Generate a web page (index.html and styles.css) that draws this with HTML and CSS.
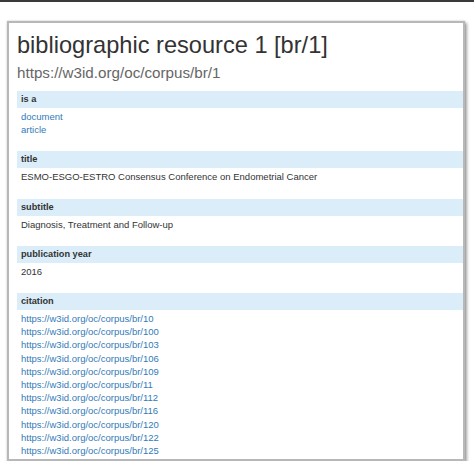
FILE: index.html
```html
<!DOCTYPE html>
<html lang="en">
<head>
  <meta charset="UTF-8" />
  <meta name="viewport" content="width=device-width, initial-scale=1.0" />
  <title>bibliographic resource 1 [br/1]</title>
  <link rel="stylesheet" href="styles.css">
</head>
<body>
  <div class="topbar"></div>
  <div class="resource">
    <h2 class="res-title">bibliographic resource 1 [br/1]</h2>
    <h4 class="res-iri">https://w3id.org/oc/corpus/br/1</h4>

    <div class="field">
      <div class="field-label">is a</div>
      <div class="field-values">
        <a href="#">document</a>
        <a href="#">article</a>
      </div>
    </div>

    <div class="field">
      <div class="field-label">title</div>
      <div class="field-values">
        <span>ESMO-ESGO-ESTRO Consensus Conference on Endometrial Cancer</span>
      </div>
    </div>

    <div class="field">
      <div class="field-label">subtitle</div>
      <div class="field-values">
        <span>Diagnosis, Treatment and Follow-up</span>
      </div>
    </div>

    <div class="field">
      <div class="field-label">publication year</div>
      <div class="field-values">
        <span>2016</span>
      </div>
    </div>

    <div class="field">
      <div class="field-label">citation</div>
      <div class="field-values">
        <a href="#">https://w3id.org/oc/corpus/br/10</a>
        <a href="#">https://w3id.org/oc/corpus/br/100</a>
        <a href="#">https://w3id.org/oc/corpus/br/103</a>
        <a href="#">https://w3id.org/oc/corpus/br/106</a>
        <a href="#">https://w3id.org/oc/corpus/br/109</a>
        <a href="#">https://w3id.org/oc/corpus/br/11</a>
        <a href="#">https://w3id.org/oc/corpus/br/112</a>
        <a href="#">https://w3id.org/oc/corpus/br/116</a>
        <a href="#">https://w3id.org/oc/corpus/br/120</a>
        <a href="#">https://w3id.org/oc/corpus/br/122</a>
        <a href="#">https://w3id.org/oc/corpus/br/125</a>
      </div>
    </div>
  </div>
</body>
</html>
```

FILE: styles.css
```css
body {
  margin: 0;
  background: #fff;
  font-family: "Liberation Sans", Arial, sans-serif;
  color: #333;
}
.topbar {
  height: 2px;
  background: #3a3a3a;
}
.resource {
  box-sizing: border-box;
  width: 458px;
  height: 440px;
  margin: 19px 0 0 7px;
  padding: 9px 0 0 8px;
  border: 2px solid #b8b8b8;
  box-shadow: 2px 2px 3px rgba(0, 0, 0, 0.35), 0 0 2px rgba(0, 0, 0, 0.2);
  overflow: hidden;
}
.res-title {
  margin: 0;
  font-size: 23.6px;
  line-height: 26px;
  font-weight: normal;
  color: #333;
}
.res-iri {
  margin: 6px 0 10px;
  font-size: 15.2px;
  line-height: 17px;
  font-weight: normal;
  color: #666;
}
.field {
  margin-bottom: 15px;
}
.field-label {
  height: 17px;
  line-height: 17px;
  padding-left: 4px;
  background: #dbedf8;
  font-size: 9.2px;
  font-weight: bold;
  color: #333;
}
.field-values {
  display: flex;
  flex-direction: column;
  align-items: flex-start;
  margin-top: 2px;
  padding-left: 4px;
  font-size: 9.5px;
  line-height: 13.2px;
}
.field-values a {
  color: #337ab7;
  text-decoration: none;
}
```
